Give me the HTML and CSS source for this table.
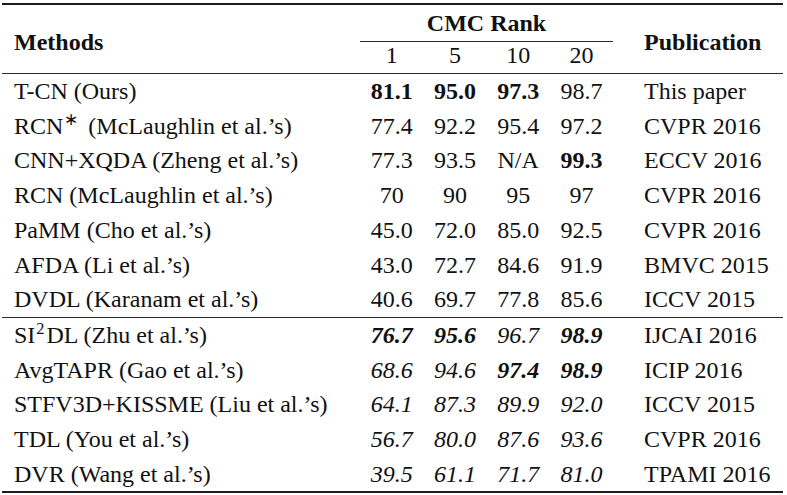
FILE: index.html
```html
<!DOCTYPE html>
<html lang="en">
<head>
<meta charset="utf-8">
<title>CMC Rank comparison</title>
<link rel="stylesheet" href="styles.css">
</head>
<body>
<table class="results">
  <colgroup>
    <col class="c-method">
    <col class="c-num"><col class="c-num"><col class="c-num"><col class="c-num">
    <col class="c-pub">
  </colgroup>
  <thead>
    <tr class="h1">
      <th rowspan="2" class="method">Methods</th>
      <th colspan="4" class="cmc">CMC Rank</th>
      <th rowspan="2" class="pub">Publication</th>
    </tr>
    <tr class="h2">
      <td class="num">1</td><td class="num">5</td><td class="num">10</td><td class="num">20</td>
    </tr>
  </thead>
  <tbody class="group">
    <tr><td class="method">T-CN (Ours)</td><td class="num"><b>81.1</b></td><td class="num"><b>95.0</b></td><td class="num"><b>97.3</b></td><td class="num">98.7</td><td class="pub">This paper</td></tr>
    <tr><td class="method">RCN<sup class="star">∗</sup> (McLaughlin et al.’s)</td><td class="num">77.4</td><td class="num">92.2</td><td class="num">95.4</td><td class="num">97.2</td><td class="pub">CVPR 2016</td></tr>
    <tr><td class="method">CNN+XQDA (Zheng et al.’s)</td><td class="num">77.3</td><td class="num">93.5</td><td class="num">N/A</td><td class="num"><b>99.3</b></td><td class="pub">ECCV 2016</td></tr>
    <tr><td class="method">RCN (McLaughlin et al.’s)</td><td class="num">70</td><td class="num">90</td><td class="num">95</td><td class="num">97</td><td class="pub">CVPR 2016</td></tr>
    <tr><td class="method">PaMM (Cho et al.’s)</td><td class="num">45.0</td><td class="num">72.0</td><td class="num">85.0</td><td class="num">92.5</td><td class="pub">CVPR 2016</td></tr>
    <tr><td class="method">AFDA (Li et al.’s)</td><td class="num">43.0</td><td class="num">72.7</td><td class="num">84.6</td><td class="num">91.9</td><td class="pub">BMVC 2015</td></tr>
    <tr><td class="method">DVDL (Karanam et al.’s)</td><td class="num">40.6</td><td class="num">69.7</td><td class="num">77.8</td><td class="num">85.6</td><td class="pub">ICCV 2015</td></tr>
  </tbody>
  <tbody class="group italic">
    <tr><td class="method">SI<sup class="sq">2</sup>DL (Zhu et al.’s)</td><td class="num"><b>76.7</b></td><td class="num"><b>95.6</b></td><td class="num">96.7</td><td class="num"><b>98.9</b></td><td class="pub">IJCAI 2016</td></tr>
    <tr><td class="method">AvgTAPR (Gao et al.’s)</td><td class="num">68.6</td><td class="num">94.6</td><td class="num"><b>97.4</b></td><td class="num"><b>98.9</b></td><td class="pub">ICIP 2016</td></tr>
    <tr><td class="method">STFV3D+KISSME (Liu et al.’s)</td><td class="num">64.1</td><td class="num">87.3</td><td class="num">89.9</td><td class="num">92.0</td><td class="pub">ICCV 2015</td></tr>
    <tr><td class="method">TDL (You et al.’s)</td><td class="num">56.7</td><td class="num">80.0</td><td class="num">87.6</td><td class="num">93.6</td><td class="pub">CVPR 2016</td></tr>
    <tr><td class="method">DVR (Wang et al.’s)</td><td class="num">39.5</td><td class="num">61.1</td><td class="num">71.7</td><td class="num">81.0</td><td class="pub">TPAMI 2016</td></tr>
  </tbody>
</table>
</body>
</html>
```

FILE: styles.css
```css
html, body {
  margin: 0;
  padding: 0;
  background: #ffffff;
}

body {
  color: #111111;
  font-family: "Liberation Serif", "Times New Roman", serif;
  font-size: 24px;
}

.results {
  border-collapse: separate;
  border-spacing: 0;
  margin: 3px 0 0 2px;
  width: 781px;
  table-layout: fixed;
  border-top: 2px solid #1e1e1e;
  border-bottom: 2px solid #1e1e1e;
}

.c-method { width: 358px; }
.c-num { width: 63.25px; }
.c-pub { width: 170px; }

.results th,
.results td {
  padding: 0;
  white-space: nowrap;
}

.results th {
  font-weight: bold;
}

.method {
  text-align: left;
  padding-left: 12px !important;
}

.num {
  text-align: center;
}

.pub {
  text-align: left;
  padding-left: 31px !important;
}

.h1 th {
  line-height: 36px;
  vertical-align: middle;
}

.h1 .cmc {
  text-align: center;
  border-bottom: 1px solid #2a2a2a;
}

.h1 .method,
.h1 .pub {
  padding-top: 6px !important;
}

.h2 td {
  line-height: 27px;
  padding-bottom: 4px;
}

.group td {
  line-height: 34.7px;
}

.group tr:first-child td {
  border-top: 1px solid #2a2a2a;
}

.italic .num {
  font-style: italic;
}

.sq {
  font-size: 0.68em;
  line-height: 0;
  vertical-align: 0.55em;
  margin-left: 1px;
  margin-right: 2px;
}

.star {
  font-size: 0.7em;
  line-height: 0;
  vertical-align: 0.5em;
  margin-left: 1px;
  margin-right: 4px;
}
```
